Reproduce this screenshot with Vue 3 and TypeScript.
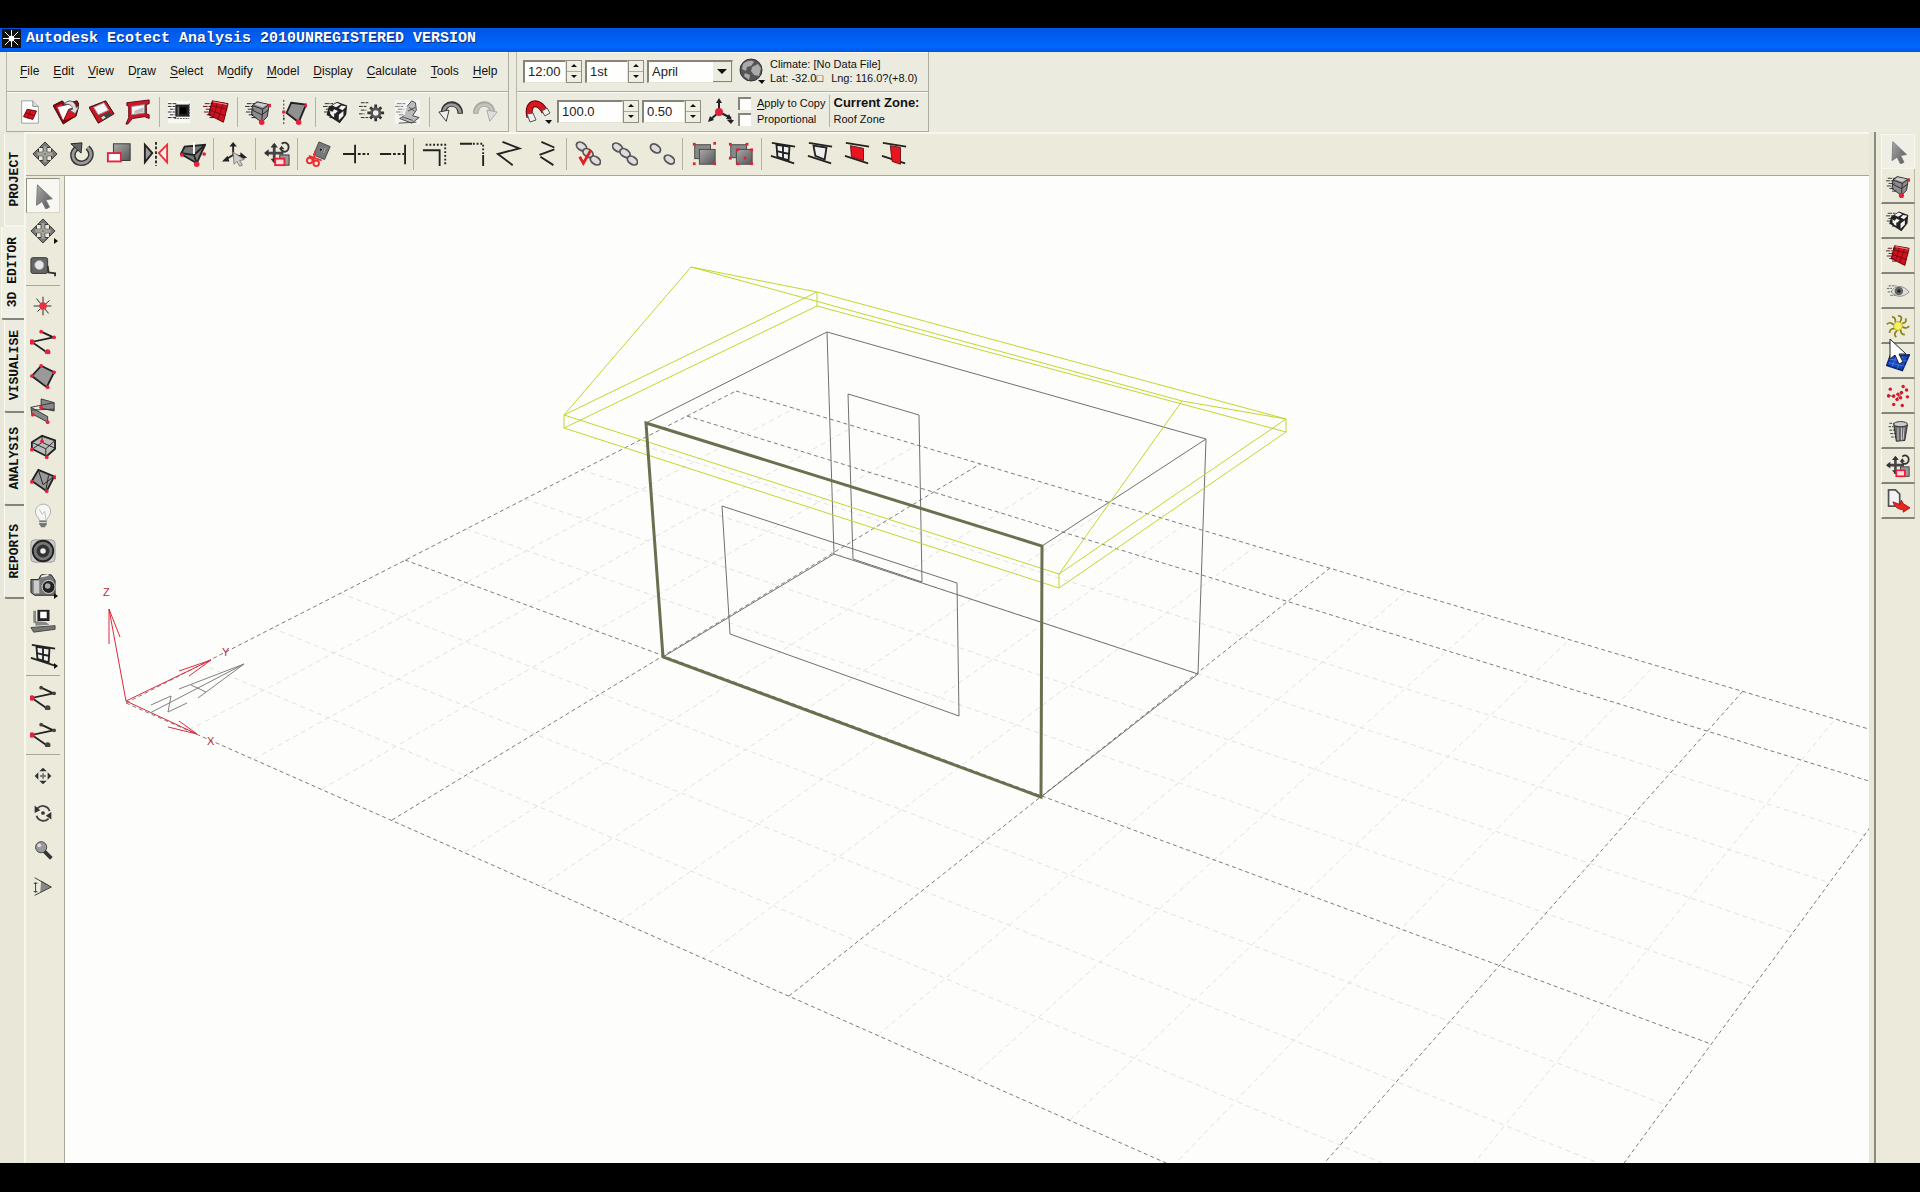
<script setup lang="ts">
import { ref } from 'vue'

type Point = [number, number]
interface Tool { icon: string; label: string; menu?: boolean }
interface Menu { before: string; key: string; after: string }

const menus: Menu[] = [
  { before: '', key: 'F', after: 'ile' },
  { before: '', key: 'E', after: 'dit' },
  { before: '', key: 'V', after: 'iew' },
  { before: 'D', key: 'r', after: 'aw' },
  { before: '', key: 'S', after: 'elect' },
  { before: 'M', key: 'o', after: 'dify' },
  { before: '', key: 'M', after: 'odel' },
  { before: '', key: 'D', after: 'isplay' },
  { before: '', key: 'C', after: 'alculate' },
  { before: '', key: 'T', after: 'ools' },
  { before: '', key: 'H', after: 'elp' },
]

const tabs = ['PROJECT', '3D EDITOR', 'VISUALISE', 'ANALYSIS', 'REPORTS']
const activeTab = ref('3D EDITOR')

const time = ref('12:00')
const day = ref('1st')
const month = ref('April')
const snap = ref('100.0')
const step = ref('0.50')
const applyToCopy = ref(false)
const proportional = ref(false)

/* Line fragments shared by several icons */
const streaks = '<path d="M2 5h9M0 8h9M3 11h7M1 14h7M4 17h6M7 20h6" stroke="#222" stroke-dasharray="5 1" fill="none"/>'
const arrows4 = '<path d="M14 5v18M5 14h18" stroke="#333" stroke-width="5"/><path d="M14 1l6 6H8zM14 27l6-6H8zM1 14l6-6v12zM27 14l-6-6v12z" fill="#777" stroke="#333"/><path d="M14 6v16M6 14h16" stroke="#e8e8e0" stroke-width="3"/><path d="M14 6v16M6 14h16" stroke="#555"/>'
const dot = (x: number, y: number, c = '#e8203c', r = 2) => `<circle cx="${x}" cy="${y}" r="${r}" fill="${c}"/>`
const polyline = (a: string, b: string) =>
  `<path d="M12 4l13 6-23 5 16 11" fill="none" stroke="#222" stroke-width="2"/>${dot(12, 4, b)}${dot(26, 10, b)}${dot(2, 15, a, 3)}${dot(19, 26, b, 3)}`
const rails = '<path d="M2 2l25 4M1 16l25 8" stroke="#222" stroke-width="2" fill="none"/>'
const link = (x: number, y: number) => `<ellipse cx="${x}" cy="${y}" rx="6" ry="4" transform="rotate(35 ${x} ${y})" fill="#ddd" stroke="#555" stroke-width="2"/>`
const corners = (pts: Point[]) => pts.map(([x, y]) => `<rect x="${x}" y="${y}" width="3" height="3" fill="#e0243c"/>`).join('')

const icons: Record<string, string> = {
  fileNew: '<path d="M5 2h12l6 6v18H5z" fill="#fff" stroke="#999"/><path d="M17 2v6h6" fill="#ddd" stroke="#888"/><path d="M11 11l10 2-4 9-10-3z" fill="#d81424" stroke="#600"/><path d="M9 15l10 3M15 12l-4 9" stroke="#700"/>',
  fileOpen: '<path d="M0 7l10-5 3 3 13-3 2 4-3 12-14 9z" fill="#7a1018" stroke="#400"/><path d="M3 8l6-3 3 3 12-4-13 20z" fill="#e01824"/><path d="M5 9l6 14L24 9l-6-3z" fill="#fff"/><path d="M11 24l6-13 10-2-3 10z" fill="#d81424" stroke="#600"/><path d="M12 6c3-6 12-5 13 3l3-1-4 8-6-4 3-1c0-5-5-6-9-5z" fill="#ddd" stroke="#555"/>',
  fileSave: '<path d="M0 9l18-7 9 14-17 10z" fill="#c81824" stroke="#300"/><path d="M5 9l11-5 5 8-11 5z" fill="#f6f6f6" stroke="#999"/><path d="M12 19l9-5 4 3-10 6z" fill="#444"/><path d="M13 20l3-2 2 2-3 2z" fill="#ddd"/>',
  fileExport: '<path d="M2 4l24-3v4l-3 1v10l3 1v4l-5-2-13 2-5 6H1l3-7V8L2 7z" fill="#c81828" stroke="#601"/><path d="M7 8l14-2v9L7 17z" fill="#f4f4f4" stroke="#888"/><path d="M10 13l10-4v5l-10 2z" fill="#bbb"/>',
  chip: '<rect x="1" y="2" width="24" height="24" fill="#f8f8f4"/><path d="M1 5h10M1 8h8M3 11h6M1 14h8M3 17h6M1 20h10" stroke="#222" stroke-dasharray="4 1"/><rect x="9" y="6" width="15" height="13" fill="#222"/><path d="M24 5v15M8 21h16" stroke="#555" stroke-dasharray="2 1"/><rect x="14" y="9" width="7" height="7" fill="#000"/><path d="M12 8v10" stroke="#999"/>',
  redBlock: '<path d="M10 2l17 3-5 20-16-8z" fill="#d41020" stroke="#500"/><path d="M9 7l17 4M7 12l17 6M16 3l-5 17M22 4l-6 18" stroke="#6a0a10" fill="none"/><path d="M11 3l15 3" stroke="#ff9aa0"/>' + streaks.replace('#222', '#501'),
  planePick: '<path d="M8 7l5-4 13 3-2 13-6 6L7 17z" fill="#8c8c8c" stroke="#222"/><path d="M8 7l11 4 7-5M8 12l10 5 7-5M19 11l-1 14" stroke="#222" fill="none"/><path d="M10 6l9 3 5-3-10-2z" fill="#ccc"/>' + streaks + dot(27, 7) + dot(18, 25, '#e8203c', 3),
  surfPick: '<path d="M11 4l16 2-8 19-13-10z" fill="#909090" stroke="#222" stroke-width="2"/><path d="M3 1v26" stroke="#222" stroke-dasharray="2 2"/>' + dot(27, 7) + dot(19, 25, '#e8203c', 3) + dot(3, 14) + dot(3, 21, '#333', 1),
  checkBlock: '<path d="M6 9l9-6 11 4-1 10-7 9-14-9z" fill="#222"/><path d="M10 7l5-3 4 2-5 3zM20 7l5 1-4 4-4-2zM7 12l5 3v5l-4-3zM17 17l5-4v5l-5 5zM12 11l4 2-3 3-3-2z" fill="#f4f4f4"/>' + streaks,
  gearPick: '<path d="M18 6v18M9 15h18M12 9l12 12M24 9L12 21" stroke="#333" stroke-width="3"/><circle cx="18" cy="15" r="6" fill="#555"/><circle cx="18" cy="15" r="3" fill="#f0f0f0"/><path d="M2 4h8M0 8h8M2 12h6M0 16h6M2 20h8" stroke="#222" stroke-dasharray="4 1"/>',
  sketchPick: '<rect x="0" y="1" width="27" height="26" fill="#f4f4f0"/><path d="M13 8l5-6 4 2 1 8-4 6 7 2-8 6-13-5 5-3M15 9l6 4M14 13l8-4M10 20l9 3M4 26l19-1" stroke="#444" fill="#bbb"/>' + streaks.replace('#222', '#777'),
  undo: '<path d="M25 16c0-14-18-14-18-1" fill="none" stroke="#333" stroke-width="6"/><path d="M25 15c-1-12-18-12-18 0" fill="none" stroke="#999" stroke-width="3"/><path d="M2 14l11-2-3 12z" fill="#eee" stroke="#333"/>',
  redo: '<path d="M3 16C3 2 21 2 21 15" fill="none" stroke="#a8a8a0" stroke-width="6"/><path d="M3 15C4 3 21 3 21 15" fill="none" stroke="#c4c4be" stroke-width="3"/><path d="M26 14l-11-2 3 12z" fill="#ddd" stroke="#a8a8a0"/>',
  move: arrows4,
  rotate: '<path d="M20 7c8 8 1 17-7 17C3 23 2 13 8 8" fill="none" stroke="#333" stroke-width="6"/><path d="M20 7c8 8 1 17-7 17C3 23 2 13 8 8" fill="none" stroke="#999" stroke-width="3"/><path d="M2 3l12-1-1 11z" fill="#666" stroke="#222"/>',
  scale: '<rect x="8" y="3" width="18" height="18" fill="url(#steel)" stroke="#333"/><rect x="2" y="13" width="14" height="9" fill="#fff" stroke="#e8203c" stroke-width="2"/>',
  mirror: '<path d="M2 4v19l8-10z" fill="#999" stroke="#222" stroke-width="2"/><path d="M26 4v19l-9-10z" fill="#fdeeee" stroke="#e83038" stroke-width="2"/><path d="M14 1v26" stroke="#222" stroke-width="2" stroke-dasharray="3 2"/>',
  extrude: '<path d="M1 14L5 6l22-2-9 20z" fill="#777" stroke="#222" stroke-width="2"/><path d="M1 13l14 2 12-11M15 15l3 9" stroke="#222" stroke-width="2" fill="none"/><path d="M15 1v13" stroke="#fff" stroke-width="2"/>' + dot(2, 15) + dot(26, 14) + dot(18, 25, '#e8203c', 3),
  axesPick: '<path d="M12 15V4M12 15L4 20M12 15l12 2" stroke="#222" stroke-width="2"/><path d="M8 6l4-5 4 5zM6 16l-6 6 8 0zM20 12l7 6-8 2z" fill="#222"/><path d="M12 12l12 8-5 1 3 5-3 1-3-5-3 3z" fill="#ccc" stroke="#777"/>' + dot(12, 13, '#e06070', 1),
  xform: '<path d="M2 13h19M11 4v19" stroke="#444" stroke-width="3"/><path d="M7 7l4-5 4 5zM7 19l4 5 4-5zM5 9l-5 4 5 4z" fill="#333"/><path d="M19 3c4-3 9 0 7 6-2 4-7 3-8-1" fill="none" stroke="#333" stroke-width="2"/><path d="M16 9l3-4 3 4z" fill="#333"/><rect x="17" y="15" width="10" height="11" fill="#999" stroke="#333"/><rect x="12" y="19" width="10" height="7" fill="#fdd" stroke="#e8203c" stroke-width="2"/>',
  cut: '<path d="M14 1l12 5-6 14-12-5z" fill="#777" stroke="#444"/><path d="M15 7l3 2-2 3M21 7l-2 6" stroke="#aaa"/><path d="M10 11l-2 11M3 16l14 5" stroke="#e83030" stroke-width="2"/><circle cx="4" cy="21" r="3" fill="none" stroke="#e83030" stroke-width="2"/><circle cx="11" cy="24" r="3" fill="none" stroke="#e83030" stroke-width="2"/>',
  trim: '<path d="M0 14h13M13 4v20" stroke="#222" stroke-width="2"/><path d="M16 14h12" stroke="#222" stroke-width="2" stroke-dasharray="3 2"/>',
  extend: '<path d="M0 14h12M27 4v21" stroke="#222" stroke-width="2"/><path d="M14 14h12" stroke="#222" stroke-width="2" stroke-dasharray="3 2"/>',
  fillet: '<path d="M1 10h18v17" fill="none" stroke="#222" stroke-width="2"/><path d="M4 4h21v21" fill="none" stroke="#222" stroke-width="2" stroke-dasharray="2 2"/>',
  chamfer: '<path d="M1 3h13M26 15v12" fill="none" stroke="#222" stroke-width="2"/><path d="M15 3h11v11" fill="none" stroke="#222" stroke-width="2" stroke-dasharray="2 2"/>',
  zig: '<path d="M7 1l18 7-23 6 16 12" fill="none" stroke="#222" stroke-width="2"/>',
  zigSplit: '<path d="M9 1l14 6M23 9L7 15M8 17l14 9" fill="none" stroke="#222" stroke-width="2"/>',
  linkOn: link(7, 6) + link(14, 13) + link(22, 21) + '<path d="M5 17l4 7 8-14" fill="none" stroke="#e02020" stroke-width="3"/>',
  linkChain: link(6, 7) + link(14, 13) + link(22, 21),
  linkOff: link(7, 8) + link(22, 20),
  group: '<rect x="4" y="4" width="17" height="15" fill="#888" stroke="#444"/><rect x="9" y="9" width="17" height="16" fill="url(#steel)" stroke="#444"/>' + corners([[2, 2], [24, 1], [2, 23], [24, 23]]),
  ungroup: '<rect x="3" y="4" width="17" height="14" fill="#888" stroke="#444"/><rect x="9" y="9" width="17" height="16" fill="url(#steel)" stroke="#444"/>' + corners([[1, 2], [19, 2], [1, 17], [9, 23], [24, 8], [24, 23], [9, 8], [17, 17]]),
  winGrid: rails + '<path d="M7 4l14 2-1 15-12-4z" fill="#eee" stroke="#222" stroke-width="2"/><path d="M14 5v15M7 11l14 3" stroke="#222" stroke-width="2"/>',
  winOpen: rails + '<path d="M7 5l14 2-2 13-10-4z" fill="#eee" stroke="#222" stroke-width="2"/>',
  winRed: rails + '<path d="M7 5l14 3v13L8 17z" fill="#e81420" stroke="#611"/>',
  doorRed: rails + '<path d="M10 5l11 2v18l-9-3z" fill="#e81420" stroke="#611"/>',
  select: '<path d="M8 2l16 15-7 1 4 8-4 2-4-8-6 4z" fill="url(#steel)" stroke="#777"/>',
  tape: '<rect x="1" y="5" width="18" height="17" rx="2" fill="#666" stroke="#333"/><circle cx="10" cy="13" r="5" fill="#e8e8e8" stroke="#999"/><path d="M19 14l1 7 7 1v3" fill="none" stroke="#333" stroke-width="2"/>',
  point: '<path d="M14 4v20M4 14h19M7 6l13 16M21 8L8 20" stroke="#222"/>' + dot(14, 14, '#e83040', 4),
  poly: polyline('#e8203c', '#e8203c'),
  polyGray: polyline('#e8203c', '#444'),
  plane: '<path d="M12 3l14 7-8 16L2 14z" fill="#999" stroke="#222" stroke-width="2"/>' + dot(12, 3) + dot(26, 10) + dot(2, 14) + dot(19, 26),
  wall: '<path d="M12 1v10l14 3V5zM1 10l18 10v6L2 17z" fill="#888" stroke="#333"/><path d="M1 10l25-5M2 13l24-1" stroke="#333"/>' + dot(12, 10) + dot(3, 18) + dot(19, 26),
  zone: '<path d="M2 10l11-7 14 5v9l-9 8L2 17z" fill="#bbb" stroke="#222" stroke-width="2"/><path d="M2 10l15 7 10-9M17 17v9M13 3v7L3 17M13 10l13 6" fill="none" stroke="#222"/>' + dot(13, 9) + dot(2, 18) + dot(18, 26),
  roof: '<path d="M9 2l17 7-8 16L2 14z" fill="#999" stroke="#222" stroke-width="2"/><path d="M9 2l5 16L26 9M20 8l-3 16M2 14l6-10" fill="none" stroke="#222"/>' + dot(2, 15) + dot(27, 10) + dot(18, 25),
  bulb: '<path d="M10 19c0-4-5-5-4-11 2-9 15-9 16 0 1 6-4 7-4 11z" fill="#f6f6f4" stroke="#aaa"/><path d="M10 7l3 5 3-3 1 9" fill="none" stroke="#bbb"/><path d="M10 19h8v4l-2 3h-4l-2-3z" fill="#777"/><path d="M10 21h8" stroke="#ddd"/>',
  speaker: '<rect x="1" y="2" width="26" height="24" rx="4" fill="#ccc" stroke="#999"/><circle cx="14" cy="14" r="11" fill="#777" stroke="#222" stroke-width="2"/><circle cx="14" cy="14" r="7" fill="#333"/><circle cx="14" cy="14" r="3" fill="#eee"/>',
  camera: '<path d="M1 7h8l3-5h11l4 6v16H5l-4-3z" fill="#777" stroke="#222"/><rect x="4" y="8" width="6" height="14" fill="#ccc"/><circle cx="20" cy="15" r="7" fill="#222" stroke="#ddd"/><circle cx="19" cy="14" r="3" fill="#aaa"/><path d="M12 4l8-2" stroke="#eee" stroke-width="2"/>',
  machine: '<rect x="8" y="2" width="13" height="12" fill="#222"/><rect x="11" y="4" width="7" height="7" fill="#fff"/><path d="M5 14l12 1 4 3-15 1z" fill="#888"/><path d="M1 21l26-2v4L4 26z" fill="#777" stroke="#444"/><path d="M5 3v13" stroke="#888" stroke-width="3"/>',
  pan: '<path d="M14 5l4 4h-8zM14 23l4-4h-8zM5 14l4-4v8zM23 14l-4-4v8z" fill="#333"/><path d="M14 11v6M11 14h6" stroke="#777" stroke-width="2"/>',
  orbit: '<path d="M8 9c5-5 12-2 13 3M20 20c-4 4-11 3-13-3" fill="none" stroke="#444" stroke-width="2"/><path d="M5 6v8l6-3zM23 13l-6 4 6 4z" fill="#333"/>' + dot(14, 14, '#333'),
  zoom: '<path d="M15 15l8 8" stroke="#333" stroke-width="4"/><circle cx="12" cy="11" r="6" fill="#999" stroke="#444"/><circle cx="10" cy="9" r="2" fill="#ddd"/>',
  fov: '<path d="M12 7l11 7-12 6z" fill="#888"/><path d="M5 4l18 10L5 23" fill="none" stroke="#333"/><path d="M6 9v11M4 10h4M4 19h4" stroke="#333"/>',
  eye: '<path d="M6 15c5-9 14-8 21 0-7 7-15 7-21 0z" fill="#ddd" stroke="#888"/><circle cx="15" cy="14" r="5" fill="#666"/><circle cx="15" cy="14" r="2" fill="#222"/><path d="M3 8h9M1 11h6M2 15h5M5 19h6" stroke="#555" stroke-dasharray="3 1"/>',
  sun: '<path d="M14 2c5 1 5 3 2 8M23 5c1 5-1 5-4 6M27 14c-3 4-5 2-8 1M22 24c-4 0-5-2-5-6M12 27c-3-3-2-5 1-8M4 22c1-5 3-5 6-5M1 12c3-3 5-2 9 1M7 3c4 1 4 3 4 7" fill="none" stroke="#8a8416" stroke-width="2"/><circle cx="14" cy="14" r="5" fill="#f6f060" stroke="#b8a818"/>',
  blueBlock: '<path d="M5 8l22-1-8 18L1 19z" fill="#1848c0" stroke="#0a2470" stroke-width="2"/><path d="M4 12l20 2M3 16l19 4M12 8l-5 13M20 8l-7 15" fill="none" stroke="#4a78e0"/>',
  scatter: [[5, 6], [20, 3], [24, 7], [3, 14], [9, 14], [14, 12], [18, 10], [13, 18], [25, 15], [9, 24], [19, 25], [17, 16]].map(([x, y]) => dot(x, y, '#d81830')).join('') + '<path d="M2 12l8 4M11 18l9-8" stroke="#b01020"/>',
  bin: '<path d="M9 6l3 20 10-1 3-18z" fill="#666" stroke="#222"/><ellipse cx="17" cy="6" rx="8" ry="3" fill="#ccc" stroke="#222"/><path d="M14 10v15M18 10v15M21 10l-1 14" stroke="#ddd"/><path d="M4 5h5M3 9h6M4 13h6M5 17h6M6 21h6" stroke="#222" stroke-dasharray="3 1"/>',
  exportDoc: '<path d="M3 1h8l5 5v14H3z" fill="#f4f4f4" stroke="#555" stroke-width="2"/><path d="M8 15l8 3 2-5 2 4 8 5-8 5v-3c-6 0-10-3-12-9z" fill="#e82820" stroke="#a01010"/>',
}

const fileTools: Tool[][] = [
  [{ icon: 'fileNew', label: 'New' }, { icon: 'fileOpen', label: 'Open' }, { icon: 'fileSave', label: 'Save' }, { icon: 'fileExport', label: 'Export' }],
  [{ icon: 'chip', label: 'Materials' }, { icon: 'redBlock', label: 'Zones' }],
  [{ icon: 'planePick', label: 'Elements' }, { icon: 'surfPick', label: 'Surfaces' }],
  [{ icon: 'checkBlock', label: 'Model settings' }, { icon: 'gearPick', label: 'Preferences' }, { icon: 'sketchPick', label: 'Sketch' }],
  [{ icon: 'undo', label: 'Undo' }, { icon: 'redo', label: 'Redo' }],
]

const editTools: Tool[][] = [
  [{ icon: 'move', label: 'Move' }, { icon: 'rotate', label: 'Rotate' }, { icon: 'scale', label: 'Scale' }, { icon: 'mirror', label: 'Mirror' }, { icon: 'extrude', label: 'Extrude' }],
  [{ icon: 'axesPick', label: 'Set origin' }],
  [{ icon: 'xform', label: 'Transform' }],
  [{ icon: 'cut', label: 'Cut' }, { icon: 'trim', label: 'Trim' }, { icon: 'extend', label: 'Extend' }],
  [{ icon: 'fillet', label: 'Fillet' }, { icon: 'chamfer', label: 'Chamfer' }, { icon: 'zig', label: 'Join' }, { icon: 'zigSplit', label: 'Split' }],
  [{ icon: 'linkOn', label: 'Link' }, { icon: 'linkChain', label: 'Relink' }, { icon: 'linkOff', label: 'Unlink' }],
  [{ icon: 'group', label: 'Group' }, { icon: 'ungroup', label: 'Ungroup' }],
  [{ icon: 'winGrid', label: 'Window' }, { icon: 'winOpen', label: 'Void' }, { icon: 'winRed', label: 'Panel' }, { icon: 'doorRed', label: 'Door' }],
]

const drawTools: Tool[][] = [
  [{ icon: 'select', label: 'Select' }, { icon: 'move', label: 'Move', menu: true }, { icon: 'tape', label: 'Measure' }],
  [
    { icon: 'point', label: 'Point' }, { icon: 'poly', label: 'Line' }, { icon: 'plane', label: 'Plane' }, { icon: 'wall', label: 'Partition' },
    { icon: 'zone', label: 'Zone' }, { icon: 'roof', label: 'Roof' }, { icon: 'bulb', label: 'Light' }, { icon: 'speaker', label: 'Speaker' },
    { icon: 'camera', label: 'Camera', menu: true }, { icon: 'machine', label: 'Appliance' }, { icon: 'winGrid', label: 'Window', menu: true },
  ],
  [{ icon: 'polyGray', label: 'Insert node' }, { icon: 'polyGray', label: 'Append node' }],
  [{ icon: 'pan', label: 'Pan' }, { icon: 'orbit', label: 'Orbit' }, { icon: 'zoom', label: 'Zoom' }, { icon: 'fov', label: 'Field of view' }],
]

const panels: Tool[] = [
  { icon: 'select', label: 'Selection' }, { icon: 'planePick', label: 'Elements' }, { icon: 'checkBlock', label: 'Materials' },
  { icon: 'redBlock', label: 'Zones' }, { icon: 'eye', label: 'Display' }, { icon: 'sun', label: 'Shadows' }, { icon: 'blueBlock', label: 'Analysis grid' },
  { icon: 'scatter', label: 'Rays' }, { icon: 'bin', label: 'Parametric' }, { icon: 'xform', label: 'Transform' }, { icon: 'exportDoc', label: 'Export' },
]

/* Known ground points (grid unit -> view position); the camera projection is fitted through them */
const anchors: { g: Point; p: Point }[] = [
  { g: [1, 1], p: [126, 702] }, { g: [5, 1], p: [392, 820] }, { g: [10, 1], p: [789, 995] },
  { g: [1, 5], p: [405, 560] }, { g: [5, 5], p: [663, 657] }, { g: [10, 5], p: [1041, 797] },
  { g: [15, 5], p: [1500, 967] }, { g: [17, 5], p: [1711, 1044] }, { g: [1, 10], p: [687, 417] },
  { g: [5, 10], p: [931, 491] }, { g: [10, 10], p: [1289, 602] }, { g: [15, 10], p: [1708, 730] },
  { g: [1, 11], p: [737, 391] }, { g: [5, 11], p: [980, 464] }, { g: [10, 11], p: [1332, 568] }, { g: [15, 11], p: [1742, 692] },
]

function fitProjection(): number[] {
  const m = Array.from({ length: 8 }, () => new Array<number>(9).fill(0))
  const add = (row: number[], rhs: number) => {
    for (let i = 0; i < 8; i++) {
      for (let j = 0; j < 8; j++) m[i][j] += row[i] * row[j]
      m[i][8] += row[i] * rhs
    }
  }
  for (const { g: [u, v], p: [x, y] } of anchors) {
    const sx = x / 1000
    const sy = y / 1000
    add([u, v, 1, 0, 0, 0, -u * sx, -v * sx], sx)
    add([0, 0, 0, u, v, 1, -u * sy, -v * sy], sy)
  }
  for (let c = 0; c < 8; c++) {
    let pivot = c
    for (let r = c + 1; r < 8; r++) if (Math.abs(m[r][c]) > Math.abs(m[pivot][c])) pivot = r
    ;[m[c], m[pivot]] = [m[pivot], m[c]]
    for (let r = 0; r < 8; r++) {
      if (r === c) continue
      const f = m[r][c] / m[c][c]
      for (let k = c; k < 9; k++) m[r][k] -= f * m[c][k]
    }
  }
  return m.map((row, i) => row[8] / row[i])
}

const h = fitProjection()
function project(u: number, v: number): Point {
  const w = h[6] * u + h[7] * v + 1
  return [Math.round((1000 * (h[0] * u + h[1] * v + h[2])) / w), Math.round((1000 * (h[3] * u + h[4] * v + h[5])) / w)]
}

const segment = (a: Point, b: Point) => `M${a[0]} ${a[1]}L${b[0]} ${b[1]}`
const majorU = [1, 5, 10, 15, 17]
const majorV = [1, 5, 10, 11]
let major = ''
let minor = ''
for (let u = 1; u <= 17; u++) {
  const d = segment(project(u, 1), project(u, 11))
  if (majorU.includes(u)) major += d
  else minor += d
}
for (let v = 1; v <= 11; v++) {
  const d = segment(project(1, v), project(17, v))
  if (majorV.includes(v)) major += d
  else minor += d
}
</script>

<template>
  <div class="screen">
    <svg class="defs" aria-hidden="true">
      <defs>
        <linearGradient id="steel" x1="0" y1="0" x2="1" y2="1">
          <stop offset="0" stop-color="#aaa" />
          <stop offset="1" stop-color="#555" />
        </linearGradient>
      </defs>
    </svg>

    <header class="titlebar">
      <svg class="logo" viewBox="0 0 20 20" aria-hidden="true">
        <rect width="20" height="20" fill="#111" />
        <path d="M10 1v18M1 10h18M3 3l14 14M17 3L3 17" stroke="#fff" />
        <circle cx="10" cy="10" r="3" fill="#fff" />
      </svg>
      <h1>Autodesk Ecotect Analysis 2010UNREGISTERED VERSION</h1>
    </header>

    <div class="bars">
      <div class="bar-left">
        <nav class="menubar">
          <button v-for="m in menus" :key="m.before + m.key + m.after" type="button">{{ m.before }}<u>{{ m.key }}</u>{{ m.after }}</button>
        </nav>
        <div class="toolbar file-bar">
          <div v-for="(group, i) in fileTools" :key="i" class="group">
            <button v-for="t in group" :key="t.icon" type="button" class="tool" :aria-label="t.label">
              <svg viewBox="0 0 28 28" v-html="icons[t.icon]" />
            </button>
          </div>
        </div>
      </div>

      <div class="bar-right">
        <div class="setting-row">
          <div class="spin">
            <input v-model="time" class="w-time" aria-label="Time" />
            <span class="arrows"><button type="button" aria-label="Later"><i class="up" /></button><button type="button" aria-label="Earlier"><i class="down" /></button></span>
          </div>
          <div class="spin">
            <input v-model="day" class="w-time" aria-label="Day" />
            <span class="arrows"><button type="button" aria-label="Next day"><i class="up" /></button><button type="button" aria-label="Previous day"><i class="down" /></button></span>
          </div>
          <div class="combo">
            <select v-model="month" aria-label="Month">
              <option>April</option>
              <option>May</option>
            </select>
            <span class="combo-arrow"><i class="down" /></span>
          </div>
          <button type="button" class="globe" aria-label="Climate data">
            <svg viewBox="0 0 28 28">
              <circle cx="13" cy="13" r="11" fill="#555" stroke="#333" />
              <path d="M5 7c4-4 9-4 11-2l-3 4-4 1-1 4-4-2zM14 10l6-3 3 4-2 8-5-1-3-4zM7 16l5 2-1 5-5-4z" fill="#aaa" />
              <path d="M20 23h7l-3 4z" fill="#111" />
            </svg>
          </button>
          <p class="climate">Climate: [No Data File]<br /><span>Lat: -32.0□</span><span>Lng: 116.0?(+8.0)</span></p>
        </div>
        <div class="setting-row">
          <button type="button" class="magnet" aria-label="Snap">
            <svg viewBox="0 0 28 28">
              <path d="M5 20C1 6 13 1 20 15" fill="none" stroke="#600" stroke-width="7" />
              <path d="M5 20C1 6 13 1 20 15" fill="none" stroke="#d81820" stroke-width="5" />
              <path d="M2 17l6-1 3 7-6 2zM17 14l5-3 3 5-5 3z" fill="#eee" stroke="#555" />
              <path d="M20 23h7l-3 4z" fill="#111" />
            </svg>
          </button>
          <div class="spin">
            <input v-model="snap" class="w-snap" aria-label="Snap size" />
            <span class="arrows"><button type="button" aria-label="Increase snap"><i class="up" /></button><button type="button" aria-label="Decrease snap"><i class="down" /></button></span>
          </div>
          <div class="spin">
            <input v-model="step" class="w-time" aria-label="Step" />
            <span class="arrows"><button type="button" aria-label="Increase step"><i class="up" /></button><button type="button" aria-label="Decrease step"><i class="down" /></button></span>
          </div>
          <button type="button" class="axes" aria-label="Axis lock">
            <svg viewBox="0 0 28 28">
              <path d="M12 15V4M12 15l-9 8M12 15l12 6" stroke="#222" stroke-width="2" />
              <path d="M9 6l3-5 3 5zM1 25l2-6 4 4zM25 23l-6-1 3-5zM20 23h7l-3 4z" fill="#222" />
              <circle cx="12" cy="15" r="4" fill="#e02040" />
            </svg>
          </button>
          <div class="checks">
            <label><input v-model="applyToCopy" type="checkbox" /><span><u>A</u>pply to Copy</span></label>
            <label><input v-model="proportional" type="checkbox" /><span>Proportional</span></label>
          </div>
          <p class="zone"><b>Current Zone:</b><br />Roof Zone</p>
        </div>
      </div>
    </div>

    <main class="workspace">
      <nav class="tabs">
        <button v-for="t in tabs" :key="t" type="button" :class="{ active: t === activeTab }" @click="activeTab = t"><span>{{ t }}</span></button>
      </nav>

      <section class="editor">
        <div class="toolbar edit-bar">
          <div v-for="(group, i) in editTools" :key="i" class="group">
            <button v-for="t in group" :key="t.icon" type="button" class="tool" :aria-label="t.label">
              <svg viewBox="0 0 28 28" v-html="icons[t.icon]" />
            </button>
          </div>
        </div>

        <div class="view">
          <aside class="draw-bar">
            <div v-for="(group, i) in drawTools" :key="i" class="stack">
              <button v-for="(t, k) in group" :key="k" type="button" class="tool" :class="{ pressed: t.icon === 'select' }" :aria-label="t.label">
                <svg viewBox="0 0 28 28" v-html="icons[t.icon]" />
                <i v-if="t.menu" class="more" />
              </button>
            </div>
          </aside>

          <svg class="canvas" viewBox="65 176 1804 987" preserveAspectRatio="xMinYMin slice">
            <path class="minor" :d="minor" />
            <path class="major" :d="major" />
            <g class="model">
              <path d="M646 423L827 332L1206 439L1042 546M827 332L834 554L1198 674L1206 439M834 554L663 657M1198 674L1041 797" />
              <path d="M848 394L919 415L922 582L853 559Z" />
              <path d="M722 506L957 583L959 716L730 634Z" />
            </g>
            <g class="roof">
              <path d="M691 267L1182 401L1286 419M691 267L564 415M691 267L817 292M1182 401L1059 574" />
              <path d="M564 415L817 292L1286 419L1059 574Z" />
              <path d="M564 428L817 306L1286 432L1059 588Z" />
              <path d="M564 415V428M817 292V306M1286 419V432M1059 574V588" />
            </g>
            <path class="wall" d="M646 423L1042 546L1041 797L663 657Z" />
            <g class="axis">
              <path d="M126 701L109 609M109 644V609L120 637" />
              <path d="M126 701L211 660M179 671L211 660L189 676" />
              <path d="M126 701L197 734M168 727L197 734L179 721" />
              <text x="103" y="596">Z</text>
              <text x="222" y="656">Y</text>
              <text x="207" y="745">X</text>
            </g>
            <path class="north" d="M150 713L244 664M179 689L244 664L198 698M191 685L206 692M151 705L171 696L168 712L187 703" />
          </svg>
        </div>
      </section>

      <aside class="panels">
        <button v-for="(t, i) in panels" :key="t.label" type="button" :class="{ first: i === 0 }" :aria-label="t.label">
          <svg viewBox="0 0 28 28" v-html="icons[t.icon]" />
        </button>
        <svg class="cursor" viewBox="0 0 20 28" aria-hidden="true">
          <path d="M1 1v20l5-4 4 9 4-2-4-8h7z" fill="#fff" stroke="#222" />
        </svg>
      </aside>
    </main>
  </div>
</template>

<style>
body {
  margin: 0;
  background: #000;
}
</style>

<style scoped>
.screen {
  box-sizing: border-box;
  min-height: 100vh;
  padding: 28px 0 29px;
  display: flex;
  flex-direction: column;
  background: #000;
  color: #111;
  font: 12px/16px "Liberation Sans", Arial, sans-serif;
}
.screen *,
.screen *::before {
  box-sizing: border-box;
}
.defs {
  position: absolute;
  width: 0;
  height: 0;
}
button {
  display: block;
  margin: 0;
  padding: 0;
  border: 0;
  background: none;
  color: inherit;
  font: inherit;
}
p,
h1 {
  margin: 0;
}

.titlebar {
  display: flex;
  align-items: center;
  height: 24px;
  gap: 5px;
  padding: 0 2px 3px;
  background: linear-gradient(#0055e6, #0068fc 80%, #0054e0);
}
.logo {
  width: 19px;
  height: 19px;
}
h1 {
  color: #fff;
  font: bold 15px/18px "Liberation Mono", monospace;
  text-shadow: 1px 1px #0a2a80;
  white-space: nowrap;
}

.bars {
  display: flex;
  height: 80px;
  background: #ecebdf;
}
.bar-left,
.bar-right {
  border-right: 1px solid #aeac9c;
}
.bar-left {
  width: 509px;
}
.bar-right {
  width: 420px;
  padding-left: 7px;
}
.menubar,
.file-bar,
.setting-row {
  height: 40px;
  border-bottom: 1px solid #aeac9c;
  box-shadow: inset 0 1px #fbfaf4;
}
.menubar {
  display: flex;
  align-items: center;
  gap: 14px;
  margin-left: 6px;
  padding: 0 0 2px 13px;
  border-left: 1px solid #bab8a8;
}
u {
  text-decoration: underline;
  text-underline-offset: 2px;
}
.toolbar {
  display: flex;
  align-items: center;
}
.file-bar {
  margin-left: 6px;
  padding-left: 5px;
  border-left: 1px solid #bab8a8;
}
.group {
  display: flex;
}
.group + .group {
  border-left: 1px solid #b4b2a2;
}
.file-bar .group + .group {
  margin-left: 3px;
  padding-left: 2px;
}
.edit-bar .group + .group {
  margin-left: 2px;
  padding-left: 2px;
}
.tool {
  position: relative;
  display: flex;
  align-items: center;
  justify-content: center;
}
.tool svg {
  width: 26px;
  height: 26px;
}
.file-bar .tool {
  width: 36px;
  height: 30px;
}
.edit-bar .tool {
  width: 37px;
  height: 32px;
}

.setting-row {
  display: flex;
  align-items: center;
  padding: 0 0 1px 6px;
  border-left: 1px solid #bab8a8;
}
.spin {
  display: flex;
  margin-right: 3px;
}
input:not([type]),
select {
  height: 23px;
  margin: 0;
  padding: 0 3px;
  border: 1px solid #e4e3d6;
  border-top: 2px solid #85847a;
  border-left: 2px solid #85847a;
  border-radius: 0;
  background: #fefefc;
  color: #222;
  font: 13px/18px "Liberation Sans", Arial, sans-serif;
}
.w-time {
  width: 43px;
}
.w-snap {
  width: 66px;
}
.arrows {
  display: flex;
  flex-direction: column;
  width: 16px;
  height: 23px;
  border: 1px solid #8f8e80;
}
.arrows button {
  display: flex;
  flex: 1;
  align-items: center;
  justify-content: center;
  background: #f0efe4;
}
.arrows button + button {
  border-top: 1px solid #aeac9c;
}
.up,
.down {
  border: 3px solid transparent;
}
.up {
  border-top: 0;
  border-bottom-color: #111;
}
.down {
  border-bottom: 0;
  border-top-color: #111;
}
.combo {
  position: relative;
}
select {
  width: 86px;
  appearance: none;
}
.combo-arrow {
  position: absolute;
  top: 2px;
  right: 1px;
  bottom: 1px;
  display: flex;
  align-items: center;
  justify-content: center;
  width: 19px;
  border-right: 1px solid #85847a;
  border-bottom: 1px solid #85847a;
  background: #ecebdf;
  pointer-events: none;
}
.combo-arrow .down {
  border-width: 5px 5px 0;
}
.globe,
.magnet,
.axes {
  width: 28px;
  height: 28px;
}
.globe {
  margin: 0 4px 0 5px;
}
.magnet {
  margin: 0 4px 0 2px;
}
.axes {
  margin: 0 3px 0 3px;
}
.climate {
  font-size: 11px;
  line-height: 14px;
  white-space: nowrap;
}
.climate span {
  margin-right: 8px;
}
.checks {
  padding-right: 3px;
  border-right: 1px solid #b4b2a2;
}
.checks label {
  display: flex;
  align-items: center;
  gap: 6px;
  height: 16px;
  font-size: 11px;
  white-space: nowrap;
}
.checks input {
  appearance: none;
  width: 13px;
  height: 13px;
  margin: 0;
  border-top: 2px solid #85847a;
  border-left: 2px solid #85847a;
  background: #fefefc;
}
.zone {
  padding-left: 4px;
  font-size: 11px;
  line-height: 16px;
  white-space: nowrap;
}
.zone b {
  font-size: 13px;
}

.workspace {
  display: flex;
  flex: 1;
  background: #ebeadb;
}
.tabs {
  display: flex;
  flex-direction: column;
  width: 24px;
  padding-top: 2px;
  background: #e9e8d8;
}
.tabs button {
  display: flex;
  align-items: center;
  justify-content: center;
  height: 93px;
  margin-left: 4px;
  border-bottom: 2px solid #85847a;
  border-left: 1px solid #fbfaf4;
  border-radius: 0 0 0 3px;
  background: #ecebdf;
}
.tabs button:first-child {
  border-bottom-color: #f6f5ec;
}
.tabs button.active {
  margin-left: 1px;
  padding-right: 1px;
  background: #f1f0e6;
}
.tabs span {
  writing-mode: vertical-rl;
  transform: rotate(180deg);
  font: bold 13px/16px "Liberation Mono", monospace;
  white-space: nowrap;
}
.editor {
  display: flex;
  flex: 1;
  flex-direction: column;
  min-width: 0;
  border-left: 2px solid #f8f7ee;
}
.edit-bar {
  height: 44px;
  border-bottom: 1px solid #a8a698;
  box-shadow: inset 0 2px #f8f7ee;
}
.view {
  display: flex;
  flex: 1;
  min-height: 0;
}
.draw-bar {
  width: 39px;
  padding: 2px 4px 0 0;
  border-right: 1px solid #a8a698;
}
.stack + .stack {
  margin-top: 2px;
  padding-top: 2px;
  border-top: 1px solid #a8a698;
}
.draw-bar .tool {
  width: 34px;
  height: 35px;
}
.stack:nth-child(n + 3) .tool {
  height: 37px;
}
.tool.pressed {
  border: 1px solid #d8d6c8;
  border-top-color: #8f8e80;
  border-left-color: #8f8e80;
  background: #f8f8f2;
}
.more {
  position: absolute;
  right: 2px;
  bottom: 4px;
  border: 3px solid transparent;
  border-right: 0;
  border-left: 4px solid #111;
}
.canvas {
  display: block;
  flex: 1;
  width: 0;
  min-width: 0;
  height: auto;
  background: #fdfefb;
}
.canvas path {
  fill: none;
}
.minor {
  stroke: #e2e3e0;
  stroke-dasharray: 5 4;
}
.major {
  stroke: #7c7c7c;
  stroke-dasharray: 4 3;
}
.model {
  stroke: #707070;
}
.roof {
  stroke: #c3d62c;
}
.wall {
  stroke: #6a704f;
  stroke-width: 3;
}
.axis {
  stroke: #e0283c;
}
.axis text {
  fill: #c02848;
  stroke: none;
  font: 11px "Liberation Sans", Arial, sans-serif;
}
.north {
  stroke: #808080;
}

.panels {
  position: relative;
  width: 51px;
  padding: 2px 5px 0 7px;
  border-left: 5px solid #e6e6da;
  background: #ebeadb;
  box-shadow: inset 2px 0 #8b8b7c;
}
.panels button {
  display: flex;
  align-items: center;
  justify-content: center;
  width: 34px;
  height: 35px;
  border-right: 1px solid #bab8a8;
  border-bottom: 2px solid #85847a;
  border-left: 1px solid #fbfaf4;
}
.panels button.first {
  border: 1px solid #f8f7ee;
  background: #f0efe6;
}
.panels button svg {
  width: 24px;
  height: 24px;
}
.cursor {
  position: absolute;
  top: 206px;
  left: 15px;
  width: 20px;
  height: 28px;
}
</style>
